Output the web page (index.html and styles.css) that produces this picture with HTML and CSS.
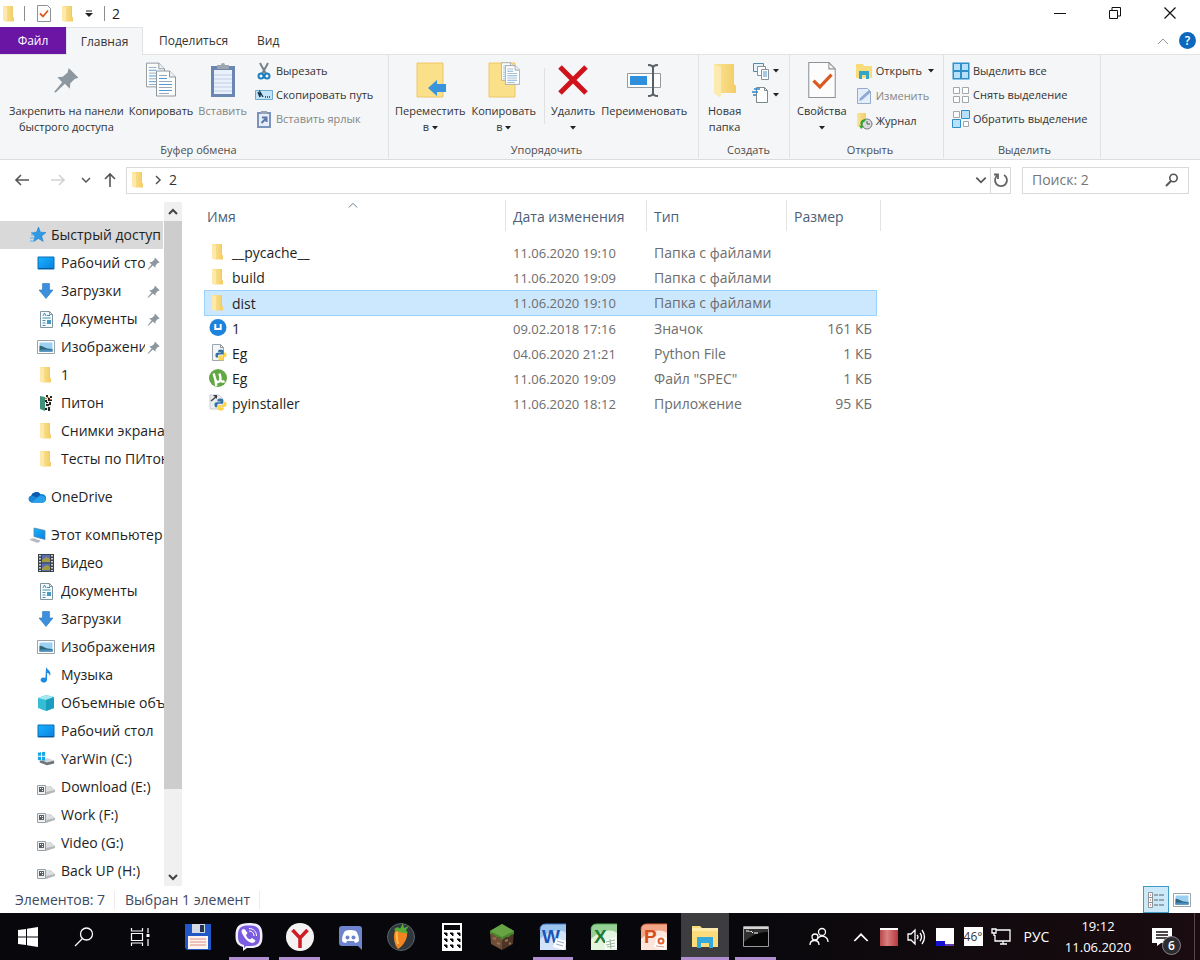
FILE: index.html
```
<!DOCTYPE html>
<html lang="ru">
<head>
    <meta charset="utf-8">
    <title>2</title>
    <link rel="stylesheet" href="styles.css">
</head>
<body>
    <svg class="sprite" width="0" height="0" aria-hidden="true">
        <linearGradient id="g-folder" x1="0" x2="1"><stop offset="0" stop-color="#fbe49a"/><stop offset="1" stop-color="#f3cd65"/></linearGradient>
        <linearGradient id="g-blue" x1="0" x2="1" y2="1"><stop offset="0" stop-color="#18b4ff"/><stop offset="1" stop-color="#0a7fe0"/></linearGradient>
        <linearGradient id="g-red" x1="0" x2="1"><stop offset="0" stop-color="#b8484c"/><stop offset=".4" stop-color="#d98080"/><stop offset="1" stop-color="#b8383c"/></linearGradient>
        <symbol id="folder" viewBox="0 0 18 18"><path d="M3 1h10v10.500l1 1v4H7l-4-1z" fill="url(#g-folder)"/><path d="M3 1l4 1.500V17l-4-1.500z" fill="#fde9a9"/><path d="M12.500 11.500V1" stroke="#eccb72" fill="none"/></symbol>
        <symbol id="pin" viewBox="0 0 24 24"><path d="M14.500 1l9 9-3.500 1-4 4-.5 5-4.500-4.500-8.500 8L1 23l7.500-9L4 9.500l5-.5 4.500-4z" fill="#8d979f"/></symbol>
        <symbol id="desktop" viewBox="0 0 18 18"><path d="M1 3h16v12H1z" fill="url(#g-blue)" stroke="#0b6fb5"/><path d="M2 14.500h14" stroke="#0858a0"/></symbol>
        <symbol id="down" viewBox="0 0 18 18"><path d="M5.500 1.500h7V8H16l-7 8.500L2 8h3.500z" fill="#3b8fdc" stroke="#2a76bd" stroke-width=".6"/></symbol>
        <symbol id="doc" viewBox="0 0 18 18"><path d="M3.500 1.500h9l3 3v13h-12z" fill="#f8fbfd" stroke="#84949f"/><path d="M12.500 1.500v3h3" fill="none" stroke="#84949f"/><path d="M6 6l1.500-3L9 6M10 5.500h3M5.500 8h8M5.500 10.500h3M5.500 13h3M5.500 15.500h3" stroke="#3d91bb" fill="none"/><path d="M10 10h4v4h-4z" fill="#4a98bd"/></symbol>
        <symbol id="image" viewBox="0 0 18 18"><path d="M.5 2.500h17v13H.500z" fill="#fff" stroke="#9aa4ab"/><path d="M2.500 4.500h13v9h-13z" fill="#9bd0f2"/><path d="M2.500 8c3-1 4 3 13 3v2.500h-13z" fill="#2d6776"/><path d="M2.500 12c4-1 8 0 13-.5v2h-13z" fill="#4a8fc4"/></symbol>
        <symbol id="piton" viewBox="0 0 18 18"><path d="M3 2l5 1v14l-5-2z" fill="#3f8f7b"/><path d="M8 3h6v13H8z" fill="#ece8e2"/><path d="M9 1h2v2H9zM13 2h2v2h-2zM11 4h2v3h-2zM8 6h2v2H8zM12 8h2v3h-2zM9 10h3v2H9zM8 14h2v2H8zM11 13h2v4h-2zM13 6h2v1h-2zM9 8h2v1H9z" fill="#222"/><path d="M10 3h2v1h-2zM13 5h2v1h-2zM8 4h2v1H8z" fill="#d4762f"/></symbol>
        <symbol id="star" viewBox="0 0 18 18"><path d="M10.500 1l2 5.200 5.500.3-4.300 3.600 1.500 5.400-4.800-3-4.700 3L7 10 3 6.500l5.500-.3z" fill="#2e9ae6" stroke="#1478c4" stroke-width=".5"/><path d="M3 6.500h3M3 9h3M2 12h4M2 15h3" stroke="#55aee8"/></symbol>
        <symbol id="cloud" viewBox="0 0 20 14"><path d="M4 13a4 4 0 01-.5-7.500A6 6 0 0114 4a4.500 4.500 0 013 9z" fill="#1488da"/><path d="M3.500 5.500A6 6 0 0114 4L9 8z" fill="#0a5bb0"/><path d="M4 13a4 4 0 01-2.500-6.500C5 4 9 7 17.500 13z" fill="#1b86d6"/><path d="M10 8c4-3 8-3 9.500 1a3 3 0 01-2.500 4H4z" fill="#28a0ea"/></symbol>
        <symbol id="pc" viewBox="0 0 18 18"><path d="M6 2l11 2.500v9L6 10.500z" fill="url(#g-blue)" stroke="#5686a8" stroke-width=".8"/><path d="M1 13.500l4-1.500 8 3-4 2z" fill="#c9ced2"/><path d="M3 14l8 2M5 13l7 2" stroke="#8f979c" stroke-width=".5"/></symbol>
        <symbol id="video" viewBox="0 0 18 18"><path d="M1 0h16v18H1z" fill="#3b434a"/><path d="M5 1h8v7.500H5zM5 9.500h8V17H5z" fill="#5b6eb6"/><path d="M5 6l4-3 4 2v3H5zM5 14l5-3 3 2v3H5z" fill="#a29a3e"/><path d="M3 1v16M15 1v16" stroke="#fff" stroke-width="1.500" stroke-dasharray="1.500 1.500"/></symbol>
        <symbol id="music" viewBox="0 0 18 18"><path d="M9 1c1 3 6 4 4 9-.5-2-1.500-3-3-3v7a3.200 2.600 0 11-1.500-2.200z" fill="#1f8be0"/></symbol>
        <symbol id="cube" viewBox="0 0 18 18"><path d="M1 4l8-3 8 2v11l-8 3-8-3z" fill="#35bdd6"/><path d="M1 4l8 2 8-3-8-2z" fill="#a5e8f1"/><path d="M9 6l8-3v11l-8 3z" fill="#1b9dbd"/></symbol>
        <symbol id="drive" viewBox="0 0 18 18"><path d="M4 10l9-2 5 4v2l-9 3-6-1z" fill="#b4b8bb"/><path d="M8 8h4l6 4-9 2z" fill="#dcdedf"/><path d="M.5 7.500h8v9h-8z" fill="#eef0f1" stroke="#98a0a6"/><path d="M2 9h5v5H2z" fill="#566068"/><path d="M3 10h1v1H3zM5 12h1v1H5zM5 10h1v1H5z" fill="#fff"/></symbol>
        <symbol id="windrive" viewBox="0 0 20 18"><path d="M3 11l9-2 7 2v3l-8 2-8-3z" fill="#6e7478"/><path d="M4 10l8-2 7 3-8 2z" fill="#d5d7d8"/><path d="M1 2l3.500-.5v4H1zM5.500 1.500L9 1v4.500H5.500zM1 6.500h3.500v4L1 10zM5.500 6.500H9V11l-3.500-.5z" fill="#14a4e8"/></symbol>
        <symbol id="python" viewBox="0 0 14 14"><path d="M7 .500c-3 0-3.300 1-3.300 2v1.300H7v.7H2.500c-1.500 0-2 1.200-2 2.700s.5 2.800 2 2.800h1V8c0-1 .8-1.700 1.800-1.700h3.200c.8 0 1.500-.7 1.500-1.500V2.500c0-1-1-2-3-2z" fill="#3673a5"/><path d="M7 13.500c3 0 3.300-1 3.300-2v-1.300H7v-.7h4.500c1.500 0 2-1.200 2-2.700S13 4 11.500 4h-1v2c0 1-.8 1.700-1.800 1.700H5.500C4.700 7.700 4 8.400 4 9.200v2.300c0 1 1 2 3 2z" fill="#ffd545"/></symbol>
        <symbol id="file-u" viewBox="0 0 18 18"><circle cx="9" cy="8.500" r="8.500" fill="#1d83dc"/><path d="M6.300 5v5h5.400V5" fill="none" stroke="#fff" stroke-width="2"/></symbol>
        <symbol id="file-py" viewBox="0 0 18 18"><path d="M3.500.500h8l3 3v13h-11z" fill="#f3f5f7" stroke="#9ba6af"/><path d="M11.500.500v3h3" fill="none" stroke="#8894a0"/><use href="#python" x="6" y="5" width="12" height="12"/></symbol>
        <symbol id="file-ut" viewBox="0 0 18 18"><circle cx="9" cy="9" r="9" fill="#62a744"/><path d="M4.500 4.500C6 7 5.500 13 9 13c3.500 0 2.500-5 1.500-8.500M11.500 11c.5 2 2.500 2 4 1M6.500 11l.8 6" stroke="#fff" stroke-width="2.400" fill="none"/></symbol>
        <symbol id="file-exe" viewBox="0 0 18 18"><path d="M1 1h9l4 4v10H1z" fill="#e9edf1" stroke="#cbd1d7"/><path d="M2 7l6-5" stroke="#47494b" stroke-width="1.500"/><path d="M4 1l4 0 0 4z" fill="#3a3c3e"/><use href="#python" x="5" y="4" width="13" height="13"/></symbol>
        <symbol id="page" viewBox="0 0 20 26"><path d="M.5.500h13l6 6v19H.500z" fill="#fdfefe" stroke="#8e979e"/><path d="M13.500.500v6h6" fill="#eceff1" stroke="#8e979e"/><path d="M3 5h8M3 17h13M3 11h13M3 23h10" stroke="#9aa9b5"/><path d="M3 8h8M3 14h13M3 20h13" stroke="#4d9ad6"/></symbol>
        <symbol id="check" viewBox="0 0 26 34"><path d="M.5.500h19l6 6v27H.500z" fill="#fcfcfd" stroke="#8c9297"/><path d="M19.500.500v6h6" fill="none" stroke="#8c9297"/><path d="M5 17.500l6 6L22 12" fill="none" stroke="#d95b21" stroke-width="3"/></symbol>
        <symbol id="chev-up" viewBox="0 0 12 12"><path d="M1 9l5-5 5 5" fill="none" stroke="currentColor"/></symbol>
        <symbol id="chev-down" viewBox="0 0 12 12"><path d="M2 4l4 4 4-4" fill="none" stroke="currentColor" stroke-width="1.500"/></symbol>
        <symbol id="caret" viewBox="0 0 6 4"><path d="M0 0h6L3 3.500z" fill="#222"/></symbol>
    </svg>

    <header class="titlebar">
        <svg class="ico"><use href="#folder"/></svg>
        <span class="bar"></span>
        <button class="qa" aria-label="Свойства"><svg width="14" height="17" viewBox="0 0 14 17"><path d="M.5.500h10l3 3v13H.500z" fill="#fcfcfd" stroke="#8c9297"/><path d="M3 8.500l3 3L11 5.500" fill="none" stroke="#d95b21" stroke-width="1.800"/></svg></button>
        <button class="qa" aria-label="Новая папка"><svg class="ico"><use href="#folder"/></svg></button>
        <button class="qa more" aria-label="Настройка"><svg width="8" height="8" viewBox="0 0 8 8"><path d="M1 1h6" stroke="#222"/><path d="M0 3h8L4 7z" fill="#222"/></svg></button>
        <span class="bar"></span>
        <span class="title">2</span>
        <div class="win-btns">
            <button aria-label="Свернуть"><svg width="12" height="12" viewBox="0 0 12 12"><path d="M0 6.500h12" stroke="#111"/></svg></button>
            <button aria-label="Развернуть"><svg width="12" height="12" viewBox="0 0 12 12"><path d="M.5 3.500h8v8h-8zM3 3.500v-3h8.500V9H9" stroke="#111" fill="none"/></svg></button>
            <button aria-label="Закрыть"><svg width="12" height="12" viewBox="0 0 12 12"><path d="M.5.500l11 11M11.500.500l-11 11" stroke="#111" stroke-width="1.200"/></svg></button>
        </div>
    </header>

    <div class="tabs">
        <button class="tab file">Файл</button>
        <button class="tab active">Главная</button>
        <button class="tab share">Поделиться</button>
        <button class="tab">Вид</button>
        <div class="tabs-right">
            <svg width="12" height="12"><use href="#chev-up"/></svg>
            <button class="help" aria-label="Справка">?</button>
        </div>
    </div>

    <div class="ribbon">
        <section class="group g-clip">
            <div class="tools">
                <button class="big"><svg width="26" height="26"><use href="#pin"/></svg><span>Закрепить на панели<br>быстрого доступа</span></button>
                <button class="big"><svg width="30" height="36" viewBox="0 0 30 36"><use href="#page" width="19" height="26"/><use href="#page" x="10" y="8" width="20" height="27"/></svg><span>Копировать</span></button>
                <button class="big off"><svg width="26" height="36" viewBox="0 0 26 36"><path d="M1 4h24v31H1z" fill="#6c86b4"/><path d="M4 8h18v24H4z" fill="#eaf1fb"/><path d="M4 13h18M4 17h18M4 21h18M4 25h18M4 29h18" stroke="#bdd0ea"/><path d="M7 3h4a2 2 0 014 0h4v4H7z" fill="#9da6af"/></svg><span>Вставить</span></button>
                <div class="list">
                    <button class="small"><svg width="18" height="18" viewBox="0 0 18 18"><path d="M5 1l6 11M13 1L7 12" stroke="#75828c" stroke-width="2"/><circle cx="6" cy="14" r="2.500" fill="none" stroke="#1c7fc0" stroke-width="2"/><circle cx="12" cy="14" r="2.500" fill="none" stroke="#1c7fc0" stroke-width="2"/></svg>Вырезать</button>
                    <button class="small"><svg width="18" height="18" viewBox="0 0 18 18"><path d="M.5 4.500h17v9H.500z" fill="#c3e4f8" stroke="#6fa9cc"/><path d="M3 6l2 5V6l3 5M10 11h1M12 11h1M14 11h1" stroke="#14384f" stroke-width="1.400" fill="none"/></svg>Скопировать путь</button>
                    <button class="small off"><svg width="18" height="18" viewBox="0 0 18 18"><path d="M3 3h12v14H3z" fill="#e6eefa" stroke="#7c93bb" stroke-width="2"/><path d="M6 1h6v3H6z" fill="#98a5b5"/><path d="M6.500 13l4-4M7 7.500h4.500V12" stroke="#5b77a8" stroke-width="2" fill="none"/></svg>Вставить ярлык</button>
                </div>
            </div>
            <h2>Буфер обмена</h2>
        </section>
        <section class="group g-org">
            <div class="tools">
                <button class="big"><svg width="32" height="36" viewBox="0 0 32 36"><path d="M3 1h26v34H3z" fill="#fbe08a" stroke="#ecc866"/><path d="M14 26l9-8v4h9v8h-9v4z" fill="#3a93dd"/></svg><span>Переместить<br>в <svg class="caret"><use href="#caret"/></svg></span></button>
                <button class="big"><svg width="32" height="36" viewBox="0 0 32 36"><path d="M1 1h26v34H1z" fill="#fbe08a" stroke="#ecc866"/><use href="#page" x="13" width="14" height="19"/><use href="#page" x="17" y="3" width="15" height="20"/></svg><span>Копировать<br>в <svg class="caret"><use href="#caret"/></svg></span></button>
                <span class="split"></span>
                <button class="big"><svg width="30" height="36" viewBox="0 0 30 36"><path d="M2 5l26 26M28 5L2 31" stroke="#d0121c" stroke-width="5"/></svg><span>Удалить<br><svg class="caret"><use href="#caret"/></svg></span></button>
                <button class="big"><svg width="34" height="36" viewBox="0 0 34 36"><path d="M.5 11.500h33v14H.500z" fill="#fff" stroke="#939a9f"/><path d="M3 14h17v9H3z" fill="#2e8fdc"/><path d="M21 3c4 0 5 1 5 3v25c0 2-1 3-5 3M31 3c-4 0-5 1-5 3v25c0 2 1 3 5 3" fill="none" stroke="#596066" stroke-width="2"/></svg><span>Переименовать</span></button>
            </div>
            <h2>Упорядочить</h2>
        </section>
        <section class="group g-new">
            <div class="tools">
                <button class="big"><svg width="24" height="36" viewBox="0 0 24 36"><path d="M1 2h20v20l2 2v7H7v4l-6-4z" fill="url(#g-folder)"/><path d="M1 2l7 3v30l-7-4z" fill="#fdeaae"/></svg><span>Новая<br>папка</span></button>
                <div class="list icons">
                    <button class="small" aria-label="Создать элемент"><svg width="18" height="18" viewBox="0 0 18 18"><path d="M1.500 1.500h10v8h-10z" fill="#e5f2fb" stroke="#5688a8"/><path d="M5.500 4.500h8v9h-8z" fill="#fff" stroke="#87939b"/><path d="M9.500 7.500h7v10h-7z" fill="#fff" stroke="#87939b"/><path d="M11 10h4M11 12h4M11 14h4" stroke="#4992c4"/></svg><svg class="caret"><use href="#caret"/></svg></button>
                    <button class="small" aria-label="Простой доступ"><svg width="18" height="18" viewBox="0 0 18 18"><path d="M4.500 1.500h8l3 3v12h-11z" fill="#fff" stroke="#7e888f"/><path d="M12.500 1.500v3h3" fill="none" stroke="#7e888f"/><path d="M2 3h6M0 6h6M1 9h3" stroke="#2c86c9" stroke-width="1.400"/></svg><svg class="caret"><use href="#caret"/></svg></button>
                </div>
            </div>
            <h2>Создать</h2>
        </section>
        <section class="group g-open">
            <div class="tools">
                <button class="big"><svg width="28" height="36"><use href="#check"/></svg><span>Свойства<br><svg class="caret"><use href="#caret"/></svg></span></button>
                <div class="list">
                    <button class="small"><svg width="18" height="18" viewBox="0 0 18 18"><path d="M1 2h7l1 2h8v12H1z" fill="#f8dc7c"/><path d="M4 17V9h10v8h-3v-4H7v4z" fill="#35a5c7"/></svg>Открыть <svg class="caret"><use href="#caret"/></svg></button>
                    <button class="small off"><svg width="18" height="18" viewBox="0 0 18 18"><path d="M2.500 1.500h10l3 3v12h-13z" fill="#e4edfa" stroke="#97abc9"/><path d="M4 14l1-3 9-8 2 2-9 8z" fill="#8fa9d0"/></svg>Изменить</button>
                    <button class="small"><svg width="18" height="18" viewBox="0 0 18 18"><path d="M2 1h9v14H2z" fill="url(#g-folder)"/><circle cx="12" cy="12" r="5" fill="#d9dcde" stroke="#73797d"/><path d="M12 9v3h3" stroke="#565b5e" fill="none"/><path d="M10 7c-5 1-5 4-4 7l-2-1 2 4 3-3H7.500c-1-2 0-4 3-5z" fill="#2ea52c"/></svg>Журнал</button>
                </div>
            </div>
            <h2>Открыть</h2>
        </section>
        <section class="group g-sel">
            <div class="tools">
                <div class="list">
                    <button class="small"><svg width="18" height="18" viewBox="0 0 18 18"><path d="M.5.500h17v17H.500z" fill="#2f8fcb"/><path d="M2 2h6v6H2zM10 2h6v6h-6zM2 10h6v6H2zM10 10h6v6h-6z" fill="#b7e1fa"/></svg>Выделить все</button>
                    <button class="small"><svg width="18" height="18" viewBox="0 0 18 18"><path d="M1.500 1.500h6v6h-6zM10.500 1.500h6v6h-6zM1.500 10.500h6v6h-6zM10.500 10.500h6v6h-6z" fill="#fff" stroke="#a1a7ab"/></svg>Снять выделение</button>
                    <button class="small"><svg width="18" height="18" viewBox="0 0 18 18"><path d="M1.500 1.500h6v6h-6zM11.500 11.500h5v5h-5z" fill="#fff" stroke="#a1a7ab"/><path d="M9.500.500h8v8h-8zM.5 9.500h8v8h-8z" fill="#b7e1fa" stroke="#2f8fcb"/></svg>Обратить выделение</button>
                </div>
            </div>
            <h2>Выделить</h2>
        </section>
    </div>

    <div class="address">
        <button aria-label="Назад"><svg width="16" height="14" viewBox="0 0 16 14"><path d="M15 7H2M7 2L2 7l5 5" fill="none" stroke="#555" stroke-width="1.600"/></svg></button>
        <button aria-label="Вперед"><svg width="16" height="14" viewBox="0 0 16 14"><path d="M1 7h13M9 2l5 5-5 5" fill="none" stroke="#d2d2d2" stroke-width="1.600"/></svg></button>
        <button class="recent" aria-label="Последние расположения"><svg width="12" height="12"><use href="#chev-down"/></svg></button>
        <button class="up" aria-label="Вверх"><svg width="14" height="16" viewBox="0 0 14 16"><path d="M7 15V2M2 7l5-5 5 5" fill="none" stroke="#555" stroke-width="1.600"/></svg></button>
        <div class="path">
            <svg class="ico"><use href="#folder"/></svg>
            <svg width="8" height="10" viewBox="0 0 8 10"><path d="M2 1l4 4-4 4" fill="none" stroke="#555" stroke-width="1.500"/></svg>
            <a href="#">2</a>
            <button class="drop" aria-label="Предыдущие расположения"><svg width="14" height="14"><use href="#chev-down"/></svg></button>
            <button class="refresh" aria-label="Обновить"><svg width="16" height="16" viewBox="0 0 16 16"><path d="M11 3a6 6 0 11-6 0M5 7V2.500H1" fill="none" stroke="#666" stroke-width="1.800"/></svg></button>
        </div>
        <div class="search">
            <input type="text" placeholder="Поиск: 2" aria-label="Поиск">
            <svg width="14" height="14" viewBox="0 0 14 14"><circle cx="8.500" cy="5" r="3.700" fill="none" stroke="#555" stroke-width="1.600"/><path d="M6 8l-5 5" stroke="#555" stroke-width="2"/></svg>
        </div>
    </div>

    <main class="content">
        <nav class="tree">
            <a href="#" class="root current"><svg class="ico"><use href="#star"/></svg><span>Быстрый доступ</span></a>
            <a href="#"><svg class="ico"><use href="#desktop"/></svg><span>Рабочий стол</span><svg class="pin"><use href="#pin"/></svg></a>
            <a href="#"><svg class="ico"><use href="#down"/></svg><span>Загрузки</span><svg class="pin"><use href="#pin"/></svg></a>
            <a href="#"><svg class="ico"><use href="#doc"/></svg><span>Документы</span><svg class="pin"><use href="#pin"/></svg></a>
            <a href="#"><svg class="ico"><use href="#image"/></svg><span>Изображения</span><svg class="pin"><use href="#pin"/></svg></a>
            <a href="#"><svg class="ico"><use href="#folder"/></svg><span>1</span></a>
            <a href="#"><svg class="ico"><use href="#piton"/></svg><span>Питон</span></a>
            <a href="#"><svg class="ico"><use href="#folder"/></svg><span>Снимки экрана</span></a>
            <a href="#"><svg class="ico"><use href="#folder"/></svg><span>Тесты по ПИтону</span></a>
            <a href="#" class="root spaced"><svg class="ico"><use href="#cloud"/></svg><span>OneDrive</span></a>
            <a href="#" class="root spaced"><svg class="ico"><use href="#pc"/></svg><span>Этот компьютер</span></a>
            <a href="#"><svg class="ico"><use href="#video"/></svg><span>Видео</span></a>
            <a href="#"><svg class="ico"><use href="#doc"/></svg><span>Документы</span></a>
            <a href="#"><svg class="ico"><use href="#down"/></svg><span>Загрузки</span></a>
            <a href="#"><svg class="ico"><use href="#image"/></svg><span>Изображения</span></a>
            <a href="#"><svg class="ico"><use href="#music"/></svg><span>Музыка</span></a>
            <a href="#"><svg class="ico"><use href="#cube"/></svg><span>Объемные объекты</span></a>
            <a href="#"><svg class="ico"><use href="#desktop"/></svg><span>Рабочий стол</span></a>
            <a href="#"><svg class="ico"><use href="#windrive"/></svg><span>YarWin (C:)</span></a>
            <a href="#"><svg class="ico"><use href="#drive"/></svg><span>Download (E:)</span></a>
            <a href="#"><svg class="ico"><use href="#drive"/></svg><span>Work (F:)</span></a>
            <a href="#"><svg class="ico"><use href="#drive"/></svg><span>Video (G:)</span></a>
            <a href="#"><svg class="ico"><use href="#drive"/></svg><span>Back UP (H:)</span></a>
        </nav>
        <div class="scroll">
            <button aria-label="Вверх"><svg width="12" height="12" viewBox="0 0 12 12"><path d="M2 8l4-4 4 4" fill="none" stroke="#444" stroke-width="2"/></svg></button>
            <div class="track"><div class="thumb"></div></div>
            <button aria-label="Вниз"><svg width="12" height="12" viewBox="0 0 12 12"><path d="M2 4l4 4 4-4" fill="none" stroke="#444" stroke-width="2"/></svg></button>
        </div>
        <div class="files">
            <table>
                <colgroup><col class="c-name"><col class="c-date"><col class="c-type"><col class="c-size"><col class="c-end"></colgroup>
                <thead>
                    <tr><th>Имя<svg class="sort"><use href="#chev-up"/></svg></th><th>Дата изменения</th><th>Тип</th><th colspan="2">Размер</th></tr>
                </thead>
                <tbody>
                    <tr><td><svg class="ico"><use href="#folder"/></svg>__pycache__</td><td>11.06.2020 19:10</td><td>Папка с файлами</td><td></td></tr>
                    <tr><td><svg class="ico"><use href="#folder"/></svg>build</td><td>11.06.2020 19:09</td><td>Папка с файлами</td><td></td></tr>
                    <tr class="selected"><td><svg class="ico"><use href="#folder"/></svg>dist</td><td>11.06.2020 19:10</td><td>Папка с файлами</td><td></td></tr>
                    <tr><td><svg class="ico"><use href="#file-u"/></svg>1</td><td>09.02.2018 17:16</td><td>Значок</td><td>161 КБ</td></tr>
                    <tr><td><svg class="ico"><use href="#file-py"/></svg>Eg</td><td>04.06.2020 21:21</td><td>Python File</td><td>1 КБ</td></tr>
                    <tr><td><svg class="ico"><use href="#file-ut"/></svg>Eg</td><td>11.06.2020 19:09</td><td>Файл "SPEC"</td><td>1 КБ</td></tr>
                    <tr><td><svg class="ico"><use href="#file-exe"/></svg>pyinstaller</td><td>11.06.2020 18:12</td><td>Приложение</td><td>95 КБ</td></tr>
                </tbody>
            </table>
        </div>
    </main>

    <footer class="status">
        <span>Элементов: 7</span>
        <span>Выбран 1 элемент</span>
        <div class="views">
            <button class="on" aria-label="Таблица"><svg width="18" height="16" viewBox="0 0 18 16"><path d="M1.500.500h4v15h-4zM1.500 5.500h4M1.500 10.500h4" fill="#fff" stroke="#8b9499"/><path d="M3 3h1M3 8h1M3 13h1" stroke="#b5382c"/><path d="M7 3h4M12 3h5M7 8h4M12 8h5M7 13h4M12 13h5" stroke="#5c676e"/></svg></button>
            <button aria-label="Крупные значки"><svg class="ico"><use href="#image"/></svg></button>
        </div>
    </footer>

    <div class="taskbar">
        <div class="system">
            <button aria-label="Пуск"><svg width="20" height="20" viewBox="0 0 20 20"><path d="M0 3l8-1v7.500H0zM9 1.800L20 0v9.500H9zM0 10.500h8V18l-8-1zM9 10.500h11V20L9 18.200z" fill="#fff"/></svg></button>
            <button aria-label="Поиск"><svg width="20" height="20" viewBox="0 0 20 20"><circle cx="12.500" cy="7" r="6" fill="none" stroke="#fff" stroke-width="1.300"/><path d="M8.500 11.500L1 19" stroke="#fff" stroke-width="1.300"/></svg></button>
            <button aria-label="Представление задач"><svg width="20" height="20" viewBox="0 0 20 20"><path d="M1.500 1v3h11V1M1.500 19v-3h11v3M1.500 6.500h11v7h-11zM18 1v5M18 12v7" fill="none" stroke="#fff" stroke-width="1.200"/><path d="M16.500 7h3v3h-3z" fill="#fff"/></svg></button>
        </div>
        <div class="apps">
            <button aria-label="Total Commander"><svg viewBox="0 0 28 28"><path d="M1 1h26v26H3l-2-2z" fill="#2257c8"/><path d="M8 1h13v9H8z" fill="#d5dbe4"/><path d="M16 2h4v7h-4z" fill="#25344e"/><path d="M4 13h20v13H4z" fill="#fff3ef"/><path d="M6 16h16M6 19h16M6 22h16" stroke="#dc8f85"/></svg></button>
            <button class="open" aria-label="Viber"><svg viewBox="0 0 28 28"><path d="M14 0c10 0 13.500 3 13.500 13S24 25 14 25h-2l-4 3v-4C2 22 .5 19 .5 13 .500 3 4 0 14 0z" fill="#f1eefd"/><path d="M14 2.500c8.500 0 11 2.500 11 10.500S22.500 23 14 23h-3l-2 2v-3c-4.500-1-6-3.500-6-9C3 5 5.500 2.500 14 2.500z" fill="#7b5be0"/><path d="M8 6c-2 1-2 3 0 6 2 4 5 7 9 8 2 0 3-1 3.500-2.500L17 15l-2 1.500c-2-1-3.500-2.500-4-4.500L12.500 10 10 6.500z" fill="#fff"/><path d="M14 8c3 0 5 2 5 5M14 5.500c4.500 0 7.500 3 7.500 7.500" fill="none" stroke="#fff"/></svg></button>
            <button class="open" aria-label="Yandex"><svg viewBox="0 0 28 28"><circle cx="14" cy="14" r="14" fill="#f5f3f2"/><path d="M6.500 7L14 15l7.500-8M14 14v11" stroke="#cf1d25" stroke-width="3.500" fill="none"/></svg></button>
            <button aria-label="Discord"><svg viewBox="0 0 28 28"><path d="M6 3h17q3 0 3 3v21l-4-4H6q-3 0-3-3V6q0-3 3-3z" fill="#6e84ce"/><path d="M9 8q5-2 11 0 3 4 3 10-2 2-4 2l-1-2H11l-1 2q-3 0-4-2 0-6 3-10z" fill="#fff"/><circle cx="11.500" cy="14.500" r="2" fill="#6e84ce"/><circle cx="17.500" cy="14.500" r="2" fill="#6e84ce"/></svg></button>
            <button aria-label="FL Studio"><svg viewBox="0 0 28 28"><circle cx="14" cy="14" r="13.500" fill="#2f383d" stroke="#58636a"/><path d="M8 8c4-4 11-2 12 2 1 6-5 14-9 16C7 22 6 13 8 8z" fill="#f28422"/><path d="M10 9c-1 4 0 8 1 12" stroke="#ffc04d" stroke-width="2" fill="none"/><path d="M7 7c2-4 5-3 6-1l3-6 1 5 5-2-3 4 2 3c-5 1-10-2-14-3z" fill="#57ac36"/></svg></button>
            <button aria-label="Калькулятор"><svg viewBox="0 0 28 28"><path d="M4 0h20v28H4z" fill="#fff"/><path d="M6 2h16v5H6z" fill="#0a0a0c"/><path d="M6 10h3v3zM12 10h3v3zM19 10h3v3zM6 16h3v3zM12 16h3v3zM19 16h3v3zM6 22h3v3zM12 22h3v3zM19 22h3v3z" fill="#0a0a0c" stroke="#0a0a0c"/></svg></button>
            <button aria-label="Minecraft"><svg viewBox="0 0 28 28"><path d="M2 8l12 6v13L3 21z" fill="#6f4d36"/><path d="M26 8l-12 6v13l11-6z" fill="#4c3426"/><path d="M14 1l12 7v3l-3 1-2 2-3 0-4 3-3-3-3 0-3-3-3 0V8z" fill="#49852f"/><path d="M14 1l12 7-12 6L2 8z" fill="#68a443"/><path d="M5 15l3 1M9 20l3 1M17 18l3-1M21 21l2-1" stroke="#987054" stroke-width="2"/></svg></button>
            <button class="open" aria-label="Word"><svg viewBox="0 0 28 28"><path d="M1 7q0-6 6-6h20v26H1z" fill="#d3e4f8"/><path d="M7 1h20v9C20 5 10 8 1 16V7q0-6 6-6z" fill="#9cc2ee"/><path d="M1 7q0-6 6-6h20" fill="none" stroke="#3f7bcb"/><text x="3" y="20" class="logo w">W</text><path d="M17 15l10 3-2 9-11-3z" fill="#fff"/><path d="M18 18l7 2M17 21l7 2" stroke="#8fabd0"/></svg></button>
            <button aria-label="Excel"><svg viewBox="0 0 28 28"><path d="M1 7q0-6 6-6h20v26H1z" fill="#e3f4df"/><path d="M7 1h20v9C20 5 10 8 1 16V7q0-6 6-6z" fill="#97d096"/><path d="M1 7q0-6 6-6h20" fill="none" stroke="#4da953"/><text x="4" y="20" class="logo x">X</text><path d="M15 17l11-3 1 11-12 2z" fill="#fff"/><path d="M16 19l9-2M16 22l9-2M17 24l8-1M20 16l1 10" stroke="#94b894"/></svg></button>
            <button aria-label="PowerPoint"><svg viewBox="0 0 28 28"><path d="M1 7q0-6 6-6h20v26H1z" fill="#fce5da"/><path d="M7 1h20v9C20 5 10 8 1 16V7q0-6 6-6z" fill="#f3a687"/><path d="M1 7q0-6 6-6h20" fill="none" stroke="#de6236"/><text x="4" y="20" class="logo p">P</text><path d="M17 13l10 2-2 12-11-3z" fill="#fff"/><circle cx="21" cy="18" r="2.500" fill="none" stroke="#e1622f" stroke-width="2"/><path d="M16 23l8 1" stroke="#dc9a83"/></svg></button>
            <button class="open current" aria-label="Проводник"><svg viewBox="0 0 28 28"><path d="M1 3h8l2 2h16v19H1z" fill="#fbdc7b"/><path d="M1 5h26v3H1z" fill="#fcebac"/><path d="M6 25V14h16v11h-4v-5h-8v5z" fill="#33a9dc"/></svg></button>
            <button class="open" aria-label="Командная строка"><svg viewBox="0 0 28 28"><path d="M1.500 3.500h25v20h-25z" fill="#060606" stroke="#9b9b9b"/><path d="M2 4h24v2H2z" fill="#d6d6d6"/><path d="M2 6h24v3C15 9 9 13 2 19z" fill="#313131"/><path d="M4 8h3M8 8v1M9 8l2 2M12 10h4" stroke="#fff"/></svg></button>
        </div>
        <div class="tray">
            <button class="people" aria-label="Люди"><svg width="20" height="20" viewBox="0 0 20 20"><circle cx="13" cy="5" r="3.500"/><circle cx="6" cy="10" r="3"/><path d="M1 18c0-6 9-6 9 0M9 11c4-4 10-1 10 4"/></svg></button>
            <button aria-label="Скрытые значки"><svg width="16" height="16"><use href="#chev-up"/></svg></button>
            <button aria-label="Красный значок"><svg width="20" height="20" viewBox="0 0 20 20"><path d="M1 1h18v2H1z" fill="#fff" stroke="none"/><path d="M1 3h18v16H1z" fill="url(#g-red)" stroke="none"/></svg></button>
            <button aria-label="Громкость"><svg width="20" height="20" viewBox="0 0 20 20"><path d="M1 7h3l4-4v14l-4-4H1zM10 8q2 2 0 4M13 6q3 4 0 8M15 3q5 7 0 14"/></svg></button>
            <button aria-label="Монитор загрузки"><svg width="20" height="20" viewBox="0 0 20 20"><path d="M1 1h18v18H1z" fill="#fff" stroke="none"/><path d="M1 14h9v5H1z" fill="#1512d6" stroke="none"/><path d="M10 17h9v2h-9z" fill="#623aa8" stroke="none"/></svg></button>
            <button aria-label="Температура"><span class="temp">46°</span></button>
            <button aria-label="Сеть"><svg width="20" height="20" viewBox="0 0 20 20"><path d="M5 3h14v11H4V8M9 17h7M12 14v3M1 2h4v4H1zM3 6v3"/></svg></button>
            <button class="lang">РУС</button>
            <button class="clock"><span>19:12</span><span>11.06.2020</span></button>
            <button class="notes" aria-label="Уведомления"><svg width="20" height="20" viewBox="0 0 20 20"><path d="M0 1h20v15H9l-4 3v-3H0z" fill="#fff" stroke="none"/><path d="M4 5h12M4 8h12M4 11h12" stroke="#1a0d10" stroke-width="1.500"/></svg><span class="badge">6</span></button>
            <button class="peek" aria-label="Свернуть все окна"></button>
        </div>
    </div>
</body>
</html>
```

FILE: styles.css
```
* {
    box-sizing: border-box;
}
body {
    margin: 0;
    height: 100vh;
    display: flex;
    flex-direction: column;
    background: #fff;
    color: #1e1e1e;
    font-family: "Open Sans", "Noto Sans", sans-serif;
    font-size: 14px;
    line-height: 18px;
}
button {
    background: none;
    border: 0;
    padding: 0;
    margin: 0;
    color: inherit;
    font: inherit;
}
a {
    color: inherit;
    text-decoration: none;
}
svg {
    flex: none;
}
.sprite {
    position: absolute;
}
.ico {
    width: 18px;
    height: 18px;
}
.caret {
    width: 6px;
    height: 4px;
    vertical-align: middle;
}

/* title bar */
.titlebar {
    display: flex;
    align-items: center;
    height: 27px;
    flex: none;
}
.titlebar .bar {
    width: 1px;
    height: 15px;
    background: #8c8c8c;
    margin: 0 7px 0 6px;
}
.qa {
    display: flex;
    justify-content: center;
    width: 24px;
}
.qa.more {
    width: 18px;
}
.titlebar .title {
    line-height: 20px;
}
.win-btns {
    margin-left: auto;
    display: flex;
    padding-right: 3px;
}
.win-btns button {
    width: 55px;
}

/* tabs */
.tabs {
    display: flex;
    height: 28px;
    flex: none;
    border-bottom: 1px solid #e2e3e4;
    font-size: 12px;
}
.tab {
    padding: 0 16px;
    color: #333;
}
.tab.file {
    width: 66px;
    background: #6b15a5;
    color: #fff;
}
.tab.active {
    width: 77px;
    padding: 0;
    background: #f5f6f7;
    border: 1px solid #e2e3e4;
    border-bottom: 0;
    margin-bottom: -1px;
}
.tab.share {
    width: 98px;
}
.tabs-right {
    margin-left: auto;
    display: flex;
    align-items: center;
    gap: 10px;
    padding-right: 4px;
    color: #999;
}
.help {
    width: 17px;
    height: 17px;
    border-radius: 50%;
    background: #0c68bd;
    color: #fff;
    line-height: 17px;
    font-weight: 600;
}

/* ribbon */
.ribbon {
    display: flex;
    flex: none;
    height: 105px;
    background: #f5f6f7;
    border-bottom: 1px solid #dcddde;
    font-size: 11px;
    line-height: 16px;
    color: #333;
}
.group {
    display: flex;
    flex-direction: column;
    margin-bottom: 1px;
    border-right: 1px solid #e0e1e2;
}
.group h2 {
    margin: auto 0 0;
    font-size: 11px;
    font-weight: 400;
    text-align: center;
    color: #4d4d4d;
}
.tools {
    display: flex;
    align-items: flex-start;
    gap: 5px;
    padding-top: 7px;
}
.g-clip { width: 389px; padding-left: 9px; }
.g-org { width: 310px; padding-left: 6px; }
.g-new { width: 91px; padding-left: 9px; }
.g-open { width: 154px; padding-left: 7px; }
.g-sel { width: 157px; padding-left: 5px; }
.g-org .tools {
    gap: 6px;
}
.big {
    display: flex;
    flex-direction: column;
    align-items: center;
    gap: 5px;
    white-space: nowrap;
}
.big > svg {
    height: 36px;
}
.off {
    color: #858585;
}
.split {
    width: 1px;
    height: 56px;
    margin: 6px 0 0 2px;
    background: #e0e1e2;
}
.list {
    display: flex;
    flex-direction: column;
    gap: 6px;
    padding-left: 3px;
}
.small {
    display: flex;
    align-items: center;
    gap: 3px;
    height: 18px;
    white-space: nowrap;
}
.g-open .list {
    gap: 7px;
}
.g-open .small .caret {
    margin-left: 3px;
}
.icons {
    padding-left: 6px;
}

/* address bar */
.address {
    display: flex;
    align-items: center;
    flex: none;
    height: 40px;
    padding: 0 11px 0 4px;
    color: #555;
}
.address > button {
    display: flex;
    justify-content: center;
    width: 36px;
}
.address > .recent {
    width: 20px;
}
.address > .up {
    width: 28px;
    margin-right: 2px;
}
.path {
    flex: 1;
    display: flex;
    align-items: center;
    height: 27px;
    padding-left: 2px;
    gap: 7px;
    border: 1px solid #d9d9d9;
    color: #333;
}
.drop {
    display: flex;
    margin-left: auto;
    color: #555;
}
.path .drop {
    margin-right: -5px;
}
.refresh {
    display: flex;
    align-items: center;
    justify-content: center;
    width: 20px;
    height: 25px;
    border-left: 1px solid #d9d9d9;
}
.search {
    display: flex;
    align-items: center;
    width: 167px;
    height: 27px;
    margin-left: 11px;
    padding: 0 9px;
    border: 1px solid #d9d9d9;
}
.search input {
    flex: 1;
    min-width: 0;
    border: 0;
    padding: 0;
    outline: 0;
    font: inherit;
}
.search input::placeholder {
    color: #767676;
}

/* main area */
.content {
    flex: 1;
    min-height: 0;
    display: flex;
}
.tree {
    width: 164px;
    padding-top: 21px;
    overflow: hidden;
}
.tree a {
    display: flex;
    align-items: center;
    height: 28px;
    padding-left: 37px;
    gap: 6px;
}
.tree a.root {
    padding-left: 28px;
    gap: 5px;
}
.tree a.current {
    background: #d9d9d9;
    margin-right: 1px;
}
.tree a.spaced {
    margin-top: 10px;
}
.tree span {
    flex: 1;
    overflow: hidden;
    white-space: nowrap;
}
.tree .pin {
    width: 13px;
    height: 13px;
    margin: 0 4px 0 -4px;
}
.scroll {
    width: 18px;
    margin: 2px 0 0;
    display: flex;
    flex-direction: column;
    background: #f0f0f0;
}
.scroll button {
    display: flex;
    align-items: center;
    justify-content: center;
    height: 19px;
}
.track {
    flex: 1;
}
.thumb {
    height: 88%;
    background: #cdcdcd;
}
.files {
    flex: 1;
    padding-left: 22px;
    color: #6d6d6d;
}
.files table {
    width: 677px;
    table-layout: fixed;
    border-collapse: separate;
    border-spacing: 0;
}
.c-name { width: 302px; }
.c-date { width: 141px; }
.c-type { width: 140px; }
.c-size { width: 90px; }
.c-end { width: 4px; }
.files th {
    position: relative;
    height: 31px;
    padding: 2px 0 0 7px;
    border-right: 1px solid #e3e3e3;
    font-weight: 400;
    text-align: left;
    color: #4c607a;
}
.files th:first-child {
    padding-left: 3px;
}
.sort {
    position: absolute;
    top: 0;
    left: calc(50% - 7px);
    width: 10px;
    height: 10px;
}
.files thead::after {
    content: "";
    display: block;
    height: 9px;
}
.files td {
    height: 25px;
    padding: 0 0 0 7px;
    white-space: nowrap;
}
.files td:first-child {
    padding-left: 5px;
    color: #1e1e1e;
}
.files td:nth-child(2) {
    font-size: 13px;
}
.files td:nth-child(4) {
    padding-right: 5px;
    text-align: right;
}
.files td .ico {
    vertical-align: -3px;
    margin-right: 5px;
}
.selected td {
    height: 26px;
    background: #cce8ff;
    border-top: 1px solid #99d1ff;
    border-bottom: 1px solid #99d1ff;
}
.selected td:first-child {
    border-left: 1px solid #99d1ff;
    padding-left: 4px;
}
.selected td:last-child {
    border-right: 1px solid #99d1ff;
}

/* status bar */
.status {
    display: flex;
    align-items: center;
    flex: none;
    height: 27px;
    padding: 0 5px 0 15px;
    color: #3d4a5f;
}
.status span {
    padding-right: 9px;
    margin-right: 10px;
    border-right: 1px solid #ececec;
}
.views {
    margin-left: auto;
    display: flex;
}
.views button {
    display: flex;
    align-items: center;
    justify-content: center;
    width: 26px;
    height: 27px;
}
.views .on {
    background: #cbe9f8;
    border: 1px solid #3f9dc5;
}

/* taskbar */
.taskbar {
    display: flex;
    flex: none;
    height: 47px;
    background: linear-gradient(90deg, #08080c 60%, #1a0c10);
    color: #fff;
}
.taskbar button {
    display: flex;
    align-items: center;
    justify-content: center;
}
.system {
    display: flex;
    margin-right: 5px;
}
.system button {
    width: 56px;
}
.apps {
    display: grid;
    grid-template-columns: repeat(12, 1fr);
    width: 608px;
}
.apps button {
    border-bottom: 3px solid transparent;
    padding-top: 3px;
    margin: 0 5px;
}
.apps svg {
    width: 28px;
    height: 28px;
}
.apps .open {
    border-color: #b08fd0;
}
.apps .current {
    background: #3d3d3f;
    margin: 0 1px;
}
.logo {
    font: bold 19px "Liberation Sans", sans-serif;
}
.logo.w { fill: #1c56b5; }
.logo.x { fill: #1d7c35; }
.logo.p { fill: #d6501f; }
.tray {
    display: flex;
    margin-left: auto;
}
.tray button {
    width: 28px;
}
.tray svg {
    fill: none;
    stroke: #fff;
    stroke-width: 1.3px;
}
.tray .people {
    width: 56px;
}
.temp {
    width: 19px;
    height: 19px;
    background: #fff;
    color: #333;
    font-size: 12px;
    line-height: 19px;
    text-align: center;
}
.tray .lang {
    width: 43px;
}
.tray .clock {
    flex-direction: column;
    gap: 3px;
    width: 80px;
    font-size: 13px;
}
.tray .notes {
    position: relative;
    width: 56px;
    padding-right: 8px;
}
.badge {
    position: absolute;
    left: 24px;
    top: 23px;
    width: 19px;
    height: 19px;
    border: 1px solid #85858a;
    border-radius: 50%;
    background: #2c2c30;
    font-size: 12px;
    line-height: 17px;
    font-weight: 600;
}
.tray .peek {
    width: 6px;
    border-left: 1px solid #55484c;
}
```
